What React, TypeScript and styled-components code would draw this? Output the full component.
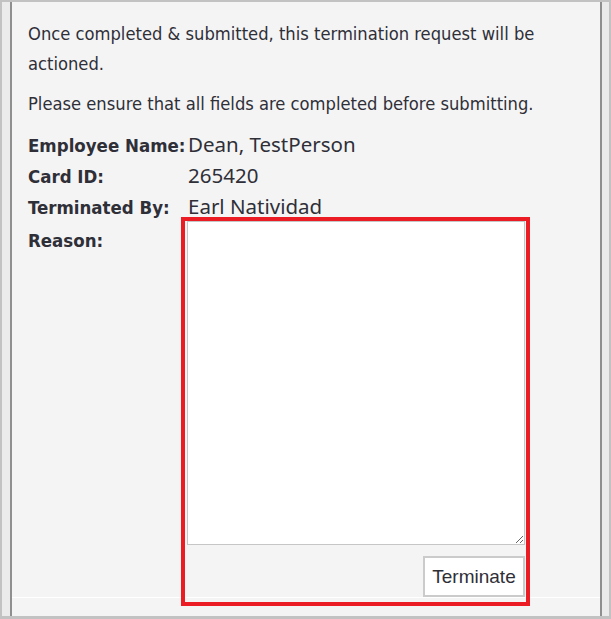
import React from 'react';
import styled, { createGlobalStyle } from 'styled-components';

const GlobalStyle = createGlobalStyle`
  html, body {
    margin: 0;
    padding: 0;
    background: #ebebeb;
  }
  * {
    box-sizing: border-box;
  }
`;

const Frame = styled.div`
  width: 611px;
  height: 619px;
  border-style: solid;
  border-color: #c2c2c2;
  border-width: 2px 2px 3px 2px;
  padding: 0 7px 0 8px;
  background: #ebebeb;
`;

const Panel = styled.div`
  height: 100%;
  display: flex;
  flex-direction: column;
  background: #f4f4f4;
  border-left: 2px solid #8f8f8f;
  border-right: 2px solid #8f8f8f;
  color: #2f2f38;
`;

const Body = styled.div`
  flex: 1;
  min-height: 0;
  padding: 17px 16px 0 16px;
  border-bottom: 1px solid #ffffff;
`;

const Footer = styled.div`
  height: 18px;
`;

const Note = styled.p<{ $gap?: number }>`
  margin: 0 0 ${(p) => p.$gap ?? 0}px 0;
  font-family: 'DejaVu Sans Condensed', 'DejaVu Sans', sans-serif;
  font-stretch: condensed;
  font-size: 18.2px;
  line-height: 30px;
`;

const Row = styled.div<{ $top?: boolean }>`
  display: grid;
  grid-template-columns: 160px 1fr;
  align-items: ${(p) => (p.$top ? 'start' : 'baseline')};
  height: ${(p) => (p.$top ? 'auto' : '31px')};
`;

const Label = styled.div<{ $pad?: number }>`
  font-family: 'DejaVu Sans Condensed', 'DejaVu Sans', sans-serif;
  font-stretch: condensed;
  font-weight: bold;
  font-size: 18.5px;
  line-height: 31px;
  padding-top: ${(p) => p.$pad ?? 0}px;
  white-space: nowrap;
`;

const Value = styled.div`
  font-family: 'Noto Sans', 'Open Sans', sans-serif;
  font-size: 20.5px;
  line-height: 31px;
  white-space: nowrap;
`;

const Highlight = styled.div`
  width: 349px;
  margin-left: -7px;
  margin-top: -5px;
  border: 4px solid #ec1c24;
  padding: 0 1px 5px 2px;
`;

const Reason = styled.textarea`
  display: block;
  width: 338px;
  height: 324px;
  margin: 0;
  border: 1px solid #c6c6c6;
  background: #ffffff;
  resize: both;
  font-family: 'Noto Sans', sans-serif;
  font-size: 16px;
  outline: none;
`;

const Actions = styled.div`
  display: flex;
  justify-content: flex-end;
  margin-top: 11px;
`;

const Button = styled.button`
  width: 102px;
  height: 41px;
  padding: 0;
  background: #ffffff;
  border: 2px solid #cbcbcb;
  font-family: 'Liberation Sans', Arial, sans-serif;
  font-size: 19px;
  color: #2f2f38;
  cursor: pointer;
`;

const details = [
  { label: 'Employee Name:', value: 'Dean, TestPerson' },
  { label: 'Card ID:', value: '265420' },
  { label: 'Terminated By:', value: 'Earl Natividad' },
];

const App = () => {
  return (
    <>
      <GlobalStyle />
      <Frame>
        <Panel>
          <Body>
            <Note $gap={10}>
              Once completed &amp; submitted, this termination request will be
              actioned.
            </Note>
            <Note $gap={10}>
              Please ensure that all fields are completed before submitting.
            </Note>
            {details.map((d) => (
              <Row key={d.label}>
                <Label>{d.label}</Label>
                <Value>{d.value}</Value>
              </Row>
            ))}
            <Row $top>
              <Label $pad={3}>Reason:</Label>
              <Highlight>
                <Reason />
                <Actions>
                  <Button type="button">Terminate</Button>
                </Actions>
              </Highlight>
            </Row>
          </Body>
          <Footer />
        </Panel>
      </Frame>
    </>
  );
};

export default App;
